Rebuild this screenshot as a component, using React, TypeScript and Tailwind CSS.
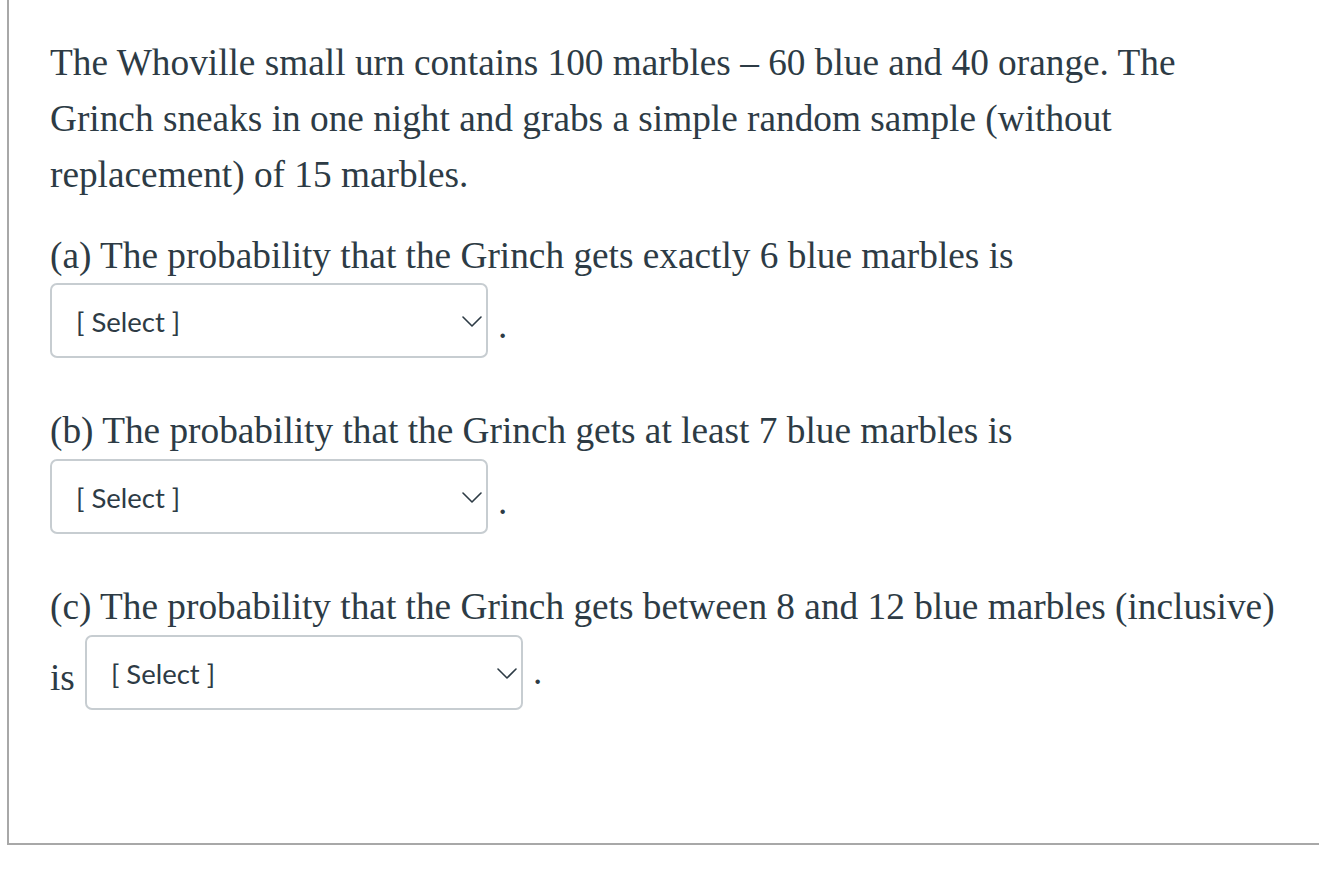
import React from "react"

// Fake dropdown, looks like the Canvas quiz select
function SelectBox({ className = "" }: { className?: string }) {
  return (
    <div
      className={`flex h-[75px] w-[438px] shrink-0 items-center justify-between rounded-[7px] border-2 border-[#c7cdd1] bg-white pl-[24px] pr-[4px] ${className}`}
    >
      <span className="mt-[2px] font-['Lato',sans-serif] text-[27.5px] leading-none text-[#2d3b45]">[ Select ]</span>
      <svg width="20" height="11" viewBox="0 0 20 11" fill="none" className="mt-[2px]">
        <polyline points="1,1 10,10 19,1" stroke="#2d3b45" strokeWidth="1.6" strokeLinejoin="round" strokeLinecap="round" />
      </svg>
    </div>
  )
}

export default function App() {
  return (
    <div className="min-h-screen bg-white">
      <div className="ml-[7px] h-[845px] w-[1312px] border-b-2 border-l-2 border-[#a8a8a8] pl-[41px] pr-[36px] pt-[35px] font-['Liberation_Serif','Times_New_Roman',serif] text-[37.3px] leading-[56px] text-[#2d3b45]">
        <p>
          The Whoville small urn contains 100 marbles – 60 blue and 40 orange. The Grinch sneaks in one night and grabs a
          simple random sample (without replacement) of 15 marbles.
        </p>

        {/* (a) */}
        <p className="mt-[25px]">(a) The probability that the Grinch gets exactly 6 blue marbles is</p>
        <div className="-mt-[1px] flex items-start">
          <SelectBox />
          <span className="ml-[10px] mt-[15px]">.</span>
        </div>

        {/* (b) */}
        <p className="mt-[45px]">(b) The probability that the Grinch gets at least 7 blue marbles is</p>
        <div className="mt-0 flex items-start">
          <SelectBox />
          <span className="ml-[10px] mt-[15px]">.</span>
        </div>

        {/* (c) */}
        <p className="mt-[45px]">(c) The probability that the Grinch gets between 8 and 12 blue marbles (inclusive)</p>
        <div className="mt-0 flex items-start">
          <span className="mt-[15px] mr-[10px]">is</span>
          <SelectBox />
          <span className="ml-[10px] mt-[9px]">.</span>
        </div>
      </div>
    </div>
  )
}
